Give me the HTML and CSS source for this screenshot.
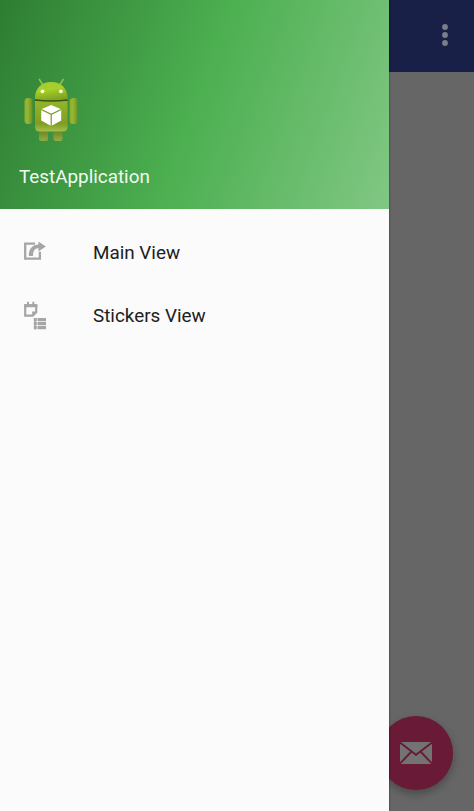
FILE: index.html
```html
<!DOCTYPE html>
<html lang="en">
<head>
<meta charset="utf-8">
<title>TestApplication</title>
<link rel="stylesheet" href="styles.css">
</head>
<body>
<div class="screen">
  <nav class="drawer">
    <header class="drawer-header">
      <svg class="robot" viewBox="0 0 56 66" width="56" height="66">
        <defs>
          <linearGradient id="head" x1="0" y1="0" x2="0.3" y2="1"><stop offset="0" stop-color="#a2cc35"/><stop offset=".5" stop-color="#a9cf28"/><stop offset="1" stop-color="#81a522"/></linearGradient>
          <linearGradient id="body" x1="0" y1="0" x2="0" y2="1"><stop offset="0" stop-color="#94b52a"/><stop offset=".75" stop-color="#7f9e22"/><stop offset="1" stop-color="#a5c04a"/></linearGradient>
          <linearGradient id="limb" x1="0" y1="0" x2="1" y2="0"><stop offset="0" stop-color="#8fae2e"/><stop offset=".4" stop-color="#96b733"/><stop offset="1" stop-color="#6f8f20"/></linearGradient>
          <linearGradient id="leg" x1="0" y1="0" x2="0" y2="1"><stop offset="0" stop-color="#5c731b"/><stop offset="1" stop-color="#93ad42"/></linearGradient>
        </defs>
        <path d="M16.400 2.500l3.200 5M40.200 2.500l-3.200 5" stroke="#94c34a" stroke-width="1.500" stroke-linecap="round"/>
        <rect x="16" y="50" width="9" height="14" rx="2.500" fill="url(#leg)"/>
        <rect x="30.500" y="50" width="9" height="14" rx="2.500" fill="url(#leg)"/>
        <rect x="1.500" y="21" width="8" height="26" rx="3.500" fill="url(#limb)"/>
        <rect x="46.700" y="21" width="8" height="26" rx="3.500" fill="url(#limb)"/>
        <path d="M12 24h32.500v26q0 4.500-5 4.500H17q-5 0-5-4.500z" fill="url(#body)"/>
        <path d="M12 22.500C11.500 11 18.500 5 28.200 5s16.800 6 16.300 17.500q-16 2-32.500 0z" fill="url(#head)"/>
        <path d="M12 23q16.500 2 32.500 0" fill="none" stroke="#3c5417" stroke-width="1.300"/>
        <circle cx="19.500" cy="14.300" r="1.900" fill="#f5ffdc"/>
        <circle cx="37.900" cy="14.300" r="1.900" fill="#f5ffdc"/>
        <path d="M28.200 28l10 4.300v11.200l-10 5.500-10-5.500V32.300z" fill="#fff"/>
        <path d="M18.200 32.500l10 4.800 10-4.800M28.200 37.300V49" fill="none" stroke="#7d9921" stroke-width="1.200"/>
      </svg>
      <div class="app-name">TestApplication</div>
    </header>
    <ul class="menu">
      <li class="menu-item">
        <svg class="menu-icon" viewBox="0 0 24 30" width="24" height="30">
          <path d="M12 5.700H2.200v15h14.700v-7" fill="none" stroke="#a6a6a6" stroke-width="2.300"/>
          <path d="M5.800 18C5.500 10.500 10 6.800 15.500 6.600V3.400l7.300 5-7.300 5v-3.200c-3.500 0-5.500 2.300-5.500 7.800z" fill="#a6a6a6"/>
        </svg>
        <span class="menu-label">Main View</span>
      </li>
      <li class="menu-item">
        <svg class="menu-icon" viewBox="0 0 24 30" width="24" height="30">
          <path d="M2.200 4.300h11v7l-3.500 3.400H2.200z" fill="none" stroke="#a6a6a6" stroke-width="2.200"/>
          <path d="M1.100 3.200h13.200v3H1.100zM4 .7h2v3H4zM9.300.7h2v3h-2zM9 10.500h5l-4.500 5z" fill="#a6a6a6"/>
          <path d="M12 17v11.300" stroke="#b4b4b4" stroke-width="2"/>
          <path d="M10.800 17h3v3.200h-3zM14.500 17H23v3.200h-8.500zM10.800 21h3v3.200h-3zM14.500 21H23v3.200h-8.500zM10.800 25h3v3.200h-3zM14.500 25H23v3.200h-8.500z" fill="#a6a6a6"/>
        </svg>
        <span class="menu-label">Stickers View</span>
      </li>
    </ul>
  </nav>
  <main class="content">
    <div class="toolbar">
      <svg width="8" height="24" viewBox="0 0 8 24" fill="#7b7e87"><circle cx="4" cy="4" r="2.900"/><circle cx="4" cy="12" r="2.900"/><circle cx="4" cy="20" r="2.900"/></svg>
    </div>
    <div class="fab">
      <svg width="32" height="22" viewBox="0 0 32 22">
        <rect width="32" height="22" fill="#737373"/>
        <path d="M0 .5l16 12.300L32 .5M0 21.500L11.500 9.500M32 21.500L20.500 9.500" fill="none" stroke="#681a37" stroke-width="1.900"/>
      </svg>
    </div>
  </main>
</div>
</body>
</html>
```
FILE: styles.css
```css
body {
  margin: 0;
  font-family: Roboto, "Liberation Sans", sans-serif;
}

.screen {
  display: flex;
  width: 474px;
  height: 811px;
  overflow: hidden;
  background: #666;
}

.drawer {
  position: relative;
  z-index: 1;
  flex: none;
  width: 389px;
  background: #fbfbfb;
  box-shadow: 0 0 2px rgba(0, 0, 0, 0.5);
}

.drawer-header {
  box-sizing: border-box;
  height: 209px;
  padding: 77px 19px 0 23px;
  background: linear-gradient(110deg, #2e7d32, #4caf50 50%, #81c784);
}

.robot {
  display: block;
}

.app-name {
  margin: 22px 0 0 -4px;
  color: #f1faf1;
  font-size: 18.85px;
  line-height: 24px;
}

.menu {
  margin: 0;
  padding: 12px 0 0;
  list-style: none;
}

.menu-item {
  display: flex;
  align-items: center;
  height: 63px;
  padding-left: 23px;
}

.menu-icon {
  flex: none;
  margin-right: 46px;
}

.menu-label {
  color: #202020;
  font-size: 18.85px;
  line-height: 24px;
}

.content {
  display: flex;
  flex: 1;
  flex-direction: column;
  justify-content: space-between;
  min-width: 0;
}

.toolbar {
  display: flex;
  align-items: center;
  justify-content: flex-end;
  box-sizing: border-box;
  height: 72px;
  padding: 0 25px 2px 0;
  background: #192048;
}

.fab {
  display: flex;
  align-items: center;
  align-self: flex-end;
  justify-content: center;
  width: 74px;
  height: 74px;
  margin: 0 21px 21px 0;
  border-radius: 50%;
  background: #681a37;
  box-shadow: 0 4px 8px rgba(0, 0, 0, 0.28);
}
```
